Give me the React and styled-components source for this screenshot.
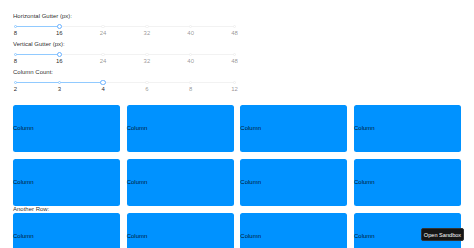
import React from "react";
import styled, { createGlobalStyle } from "styled-components";

const Global = createGlobalStyle`
  html, body { margin: 0; padding: 0; background: #fff; }
  body {
    font-family: "Liberation Sans", Arial, Helvetica, sans-serif;
    color: rgba(0, 0, 0, 0.88);
    overflow: hidden;
  }
`;

const Page = styled.div`
  display: flex;
  flex-direction: column;
  padding: 12px 13px 0 13px;
  width: 474px;
  box-sizing: border-box;
  & > * { flex-shrink: 0; }
`;

const Label = styled.div`
  font-size: 6px;
  line-height: ${(p) => p.$lh || 8}px;
  height: ${(p) => p.$lh || 8}px;
  white-space: nowrap;
`;

const SliderRoot = styled.div`
  position: relative;
  width: 224px;
  height: 20px;
  box-sizing: border-box;
  padding: 0 2.5px;
`;

const SliderInner = styled.div`
  position: relative;
  height: 100%;
`;

const Rail = styled.div`
  position: absolute;
  left: 0;
  right: 0;
  top: 5.6px;
  height: 1.7px;
  border-radius: 1px;
  background: #f2f2f2;
`;

const Track = styled.div`
  position: absolute;
  left: 0;
  top: 5.6px;
  height: 1.7px;
  border-radius: 1px;
  background: #91caff;
`;

const Dot = styled.span`
  position: absolute;
  top: 4.8px;
  width: 3.3px;
  height: 3.3px;
  box-sizing: border-box;
  margin-left: -1.65px;
  border-radius: 50%;
  background: #fff;
  border: 0.8px solid ${(p) => (p.$active ? "#91caff" : "#f0f0f0")};
`;

const Handle = styled.span`
  position: absolute;
  top: 3.7px;
  width: 5.4px;
  height: 5.4px;
  box-sizing: border-box;
  margin-left: -2.7px;
  border-radius: 50%;
  background: #fff;
  border: 0.9px solid #69b1ff;
`;

const MarkText = styled.span`
  position: absolute;
  top: 9.5px;
  font-size: 6px;
  line-height: 7px;
  transform: translateX(-50%);
  white-space: nowrap;
  color: ${(p) => (p.$active ? "rgba(0,0,0,0.88)" : "rgba(0,0,0,0.45)")};
`;

const Slider = ({ marks, index }) => {
  const n = marks.length - 1;
  const pct = (i) => (i / n) * 100;
  return (
    <SliderRoot>
      <SliderInner>
        <Rail />
        <Track style={{ width: `${pct(index)}%` }} />
        {marks.map((m, i) => (
          <Dot key={m} $active={i <= index} style={{ left: `${pct(i)}%` }} />
        ))}
        <Handle style={{ left: `${pct(index)}%` }} />
        {marks.map((m, i) => (
          <MarkText key={m} $active={i <= index} style={{ left: `${pct(i)}%` }}>
            {m}
          </MarkText>
        ))}
      </SliderInner>
    </SliderRoot>
  );
};

const Grid = styled.div`
  display: grid;
  grid-template-columns: repeat(${(p) => p.$cols}, 1fr);
  column-gap: 6.67px;
  row-gap: 6.67px;
  margin-top: ${(p) => p.$mt || 0}px;
`;

const ColumnBox = styled.div`
  height: 47px;
  display: flex;
  align-items: center;
  background: #0092ff;
  border-radius: 2.5px;
  font-size: 6px;
  line-height: 7px;
  color: rgba(0, 0, 0, 0.88);
`;

const SandboxButton = styled.button`
  position: fixed;
  right: 10px;
  bottom: 7px;
  width: 43px;
  height: 13px;
  padding: 0;
  border: 0.5px solid #333;
  border-radius: 2px;
  background: #151515;
  color: #fff;
  font-family: "Liberation Sans", Arial, sans-serif;
  font-size: 5.6px;
  line-height: 12px;
  text-align: center;
  white-space: nowrap;
`;

const hMarks = [8, 16, 24, 32, 40, 48];
const cMarks = [2, 3, 4, 6, 8, 12];

export default function App() {
  const cols = 4;
  const cells = Array.from({ length: cols * 2 });
  const cells2 = Array.from({ length: cols });
  return (
    <>
      <Global />
      <Page>
        <Label>Horizontal Gutter (px):</Label>
        <Slider marks={hMarks} index={1} />
        <Label>Vertical Gutter (px):</Label>
        <Slider marks={hMarks} index={1} />
        <Label>Column Count:</Label>
        <Slider marks={cMarks} index={2} />
        <Grid $cols={cols} $mt={9}>
          {cells.map((_, i) => (
            <ColumnBox key={i}>Column</ColumnBox>
          ))}
        </Grid>
        <Label $lh={7.33}>Another Row:</Label>
        <Grid $cols={cols}>
          {cells2.map((_, i) => (
            <ColumnBox key={i}>Column</ColumnBox>
          ))}
        </Grid>
      </Page>
      <SandboxButton>Open Sandbox</SandboxButton>
    </>
  );
}
